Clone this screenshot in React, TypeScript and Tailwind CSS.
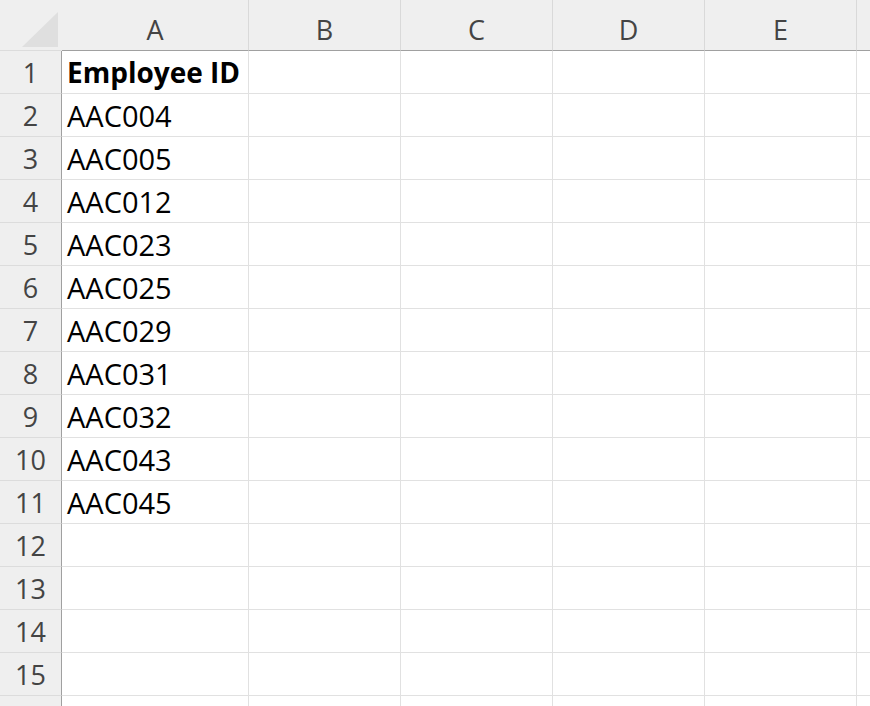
import React from "react";

const cols = ["A", "B", "C", "D", "E", ""];
const data: Record<number, string> = {
  1: "Employee ID",
  2: "AAC004",
  3: "AAC005",
  4: "AAC012",
  5: "AAC023",
  6: "AAC025",
  7: "AAC029",
  8: "AAC031",
  9: "AAC032",
  10: "AAC043",
  11: "AAC045",
};
const rows = Array.from({ length: 16 }, (_, i) => i + 1);

export default function App() {
  return (
    <div
      className="w-[870px] h-[706px] overflow-hidden bg-white"
      style={{ fontFamily: '"Open Sans", "Noto Sans", sans-serif' }}
    >
      <div className="grid grid-cols-[62px_187px_152px_152px_152px_152px_100px]">
        {/* corner */}
        <div className="h-[51px] bg-[#efefef] border-b border-b-[#dcdcdc] border-r border-r-[#efefef] flex items-start justify-end pt-[12px] pr-[3px]">
          <svg width="36" height="35" viewBox="0 0 36 35">
            <polygon points="0,35 36,0 36,35" fill="#dfdfdf" />
          </svg>
        </div>
        {cols.map((c, i) => (
          <div
            key={i}
            className="h-[51px] bg-[#efefef] border-b border-b-[#a0a0a0] border-r border-r-[#d9d9d9] flex items-end justify-center pb-0 text-[27px] text-[#444444]"
          >
            {c}
          </div>
        ))}
        {rows.map((r) => (
          <React.Fragment key={r}>
            <div className="h-[43px] bg-[#efefef] border-b border-b-[#dcdcdc] border-r border-r-[#a0a0a0] flex justify-center pt-[1px] text-[27px] leading-[41px] text-[#444444]">
              {r <= 15 ? r : ""}
            </div>
            {cols.map((_, ci) => (
              <div
                key={ci}
                className={
                  "h-[43px] border-b border-r border-[#e1e1e1] whitespace-nowrap pl-[5px] pt-[1px] leading-[41px] text-black" +
                  (r === 1 && ci === 0 ? " font-bold text-[28px]" : " text-[29px]")
                }
              >
                {ci === 0 ? data[r] ?? "" : ""}
              </div>
            ))}
          </React.Fragment>
        ))}
      </div>
    </div>
  );
}
